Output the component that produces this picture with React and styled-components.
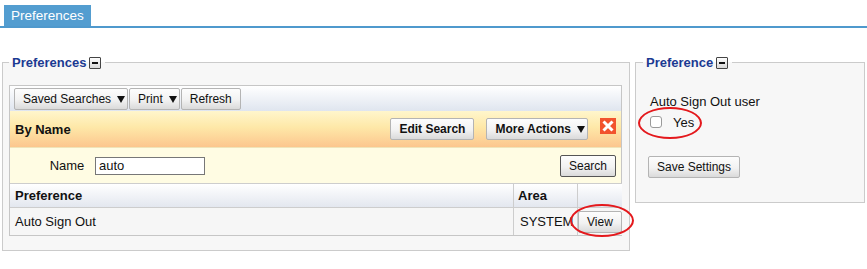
import React from "react";
import styled, { createGlobalStyle } from "styled-components";

const GlobalStyle = createGlobalStyle`
  html, body { margin: 0; padding: 0; background: #fff; }
  body { font-family: "Liberation Sans", Arial, sans-serif; font-size: 13px; color: #111; }
  * { box-sizing: border-box; }
`;

const TabBar = styled.div`
  display: flex;
  padding: 5px 0 0 4px;
  border-bottom: 2px solid #4f99cd;
`;

const Tab = styled.div`
  background: #539dd0;
  color: #fff;
  font-size: 13.5px;
  height: 21px;
  line-height: 21px;
  padding: 0 7px;
`;

const Columns = styled.div`
  display: flex;
  align-items: flex-start;
  gap: 5px;
  margin-top: 27px;
  padding-left: 2px;
`;

const Panel = styled.fieldset`
  margin: 0;
  width: ${(p) => p.$width}px;
  border: 1px solid #cbcbcb;
  background: #f7f7f7;
  padding: ${(p) => p.$pad};
  min-width: 0;
`;

const Legend = styled.legend`
  display: flex;
  align-items: center;
  gap: 3px;
  padding: 0 4px 0 3px;
  margin-left: ${(p) => p.$offset || 0}px;
  color: #1b3a92;
  font-weight: bold;
  font-size: 13px;
  line-height: 15px;
`;

const Collapse = styled.span`
  display: inline-flex;
  align-items: center;
  justify-content: center;
  width: 12px;
  height: 12px;
  border: 1px solid #444;
  border-radius: 1px;
  background: linear-gradient(#fdfdfd, #d8d8d8);
  &::after {
    content: "";
    width: 6px;
    height: 2px;
    background: #111;
  }
`;

const Grid = styled.div`
  border: 1px solid #c6c6c6;
  background: #fff;
`;

const Toolbar = styled.div`
  display: flex;
  gap: 1px;
  height: 25px;
  padding: 2px 4px 0;
  background: linear-gradient(#ffffff, #dfe5ef);
`;

const Button = styled.button`
  display: inline-flex;
  align-items: center;
  gap: 6px;
  font-family: "Liberation Sans", Arial, sans-serif;
  font-size: 12px;
  font-weight: ${(p) => (p.$bold ? "bold" : "normal")};
  color: #111;
  height: 22px;
  padding: 0 ${(p) => (p.$caret ? 2 : 8)}px 0 8px;
  border: 1px solid ${(p) => p.$border || "#b4b4b4"};
  border-radius: 2px;
  background: linear-gradient(#fdfdfd 0%, #f2f2f2 55%, #dadada 100%);
  cursor: pointer;
  white-space: nowrap;
`;

const Caret = styled.span`
  width: 0;
  height: 0;
  border-left: 4px solid transparent;
  border-right: 4px solid transparent;
  border-top: 7px solid #111;
  margin-top: 1px;
`;

const FilterHeader = styled.div`
  display: flex;
  align-items: center;
  height: 36px;
  padding: 0 5px 0 5px;
  background: linear-gradient(#fff6cc, #fee8a8 45%, #fcc68e);
`;

const FilterTitle = styled.div`
  font-weight: bold;
  flex: 1;
`;

const HeaderActions = styled.div`
  display: flex;
  align-items: center;
  gap: 12px;
`;

const CloseIcon = styled.svg`
  display: block;
  margin-top: -6px;
`;

const SearchRow = styled.div`
  display: flex;
  align-items: center;
  height: 36px;
  padding: 0 5px 0 29px;
  background: #fffce3;
  border-top: 1px solid #f0e4b8;
`;

const FieldLabel = styled.label`
  width: 56px;
  text-align: center;
`;

const TextInput = styled.input`
  width: 110px;
  height: 18px;
  border: 1px solid #777;
  padding: 0 3px;
  font-family: "Liberation Sans", Arial, sans-serif;
  font-size: 13px;
  color: #111;
  background: #fff;
  flex: none;
  margin-right: auto;
`;

const Table = styled.div`
  display: grid;
  grid-template-columns: 503px 64px 1fr;
`;

const HeadCell = styled.div`
  height: 24px;
  display: flex;
  align-items: center;
  padding-left: ${(p) => p.$pl ?? 5}px;
  font-weight: bold;
  background: linear-gradient(#ffffff, #e3e7ef);
  border-top: 1px solid #cdcdcd;
  border-left: ${(p) => (p.$first ? "none" : "1px solid #cdcdcd")};
`;

const Cell = styled.div`
  position: relative;
  height: 28px;
  display: flex;
  align-items: center;
  padding-left: ${(p) => p.$pl ?? 5}px;
  background: #f6f6f6;
  border-top: 1px solid #cdcdcd;
  border-left: ${(p) => (p.$first ? "none" : "1px solid #cdcdcd")};
`;

const Ellipse = styled.div`
  position: absolute;
  left: ${(p) => p.$x}px;
  top: ${(p) => p.$y}px;
  width: ${(p) => p.$w}px;
  height: ${(p) => p.$h}px;
  border: 2px solid #e4181c;
  border-radius: 50%;
  pointer-events: none;
`;

const Setting = styled.div`
  padding-left: 2px;
`;

const SettingLabel = styled.div`
  line-height: 16px;
`;

const CheckRow = styled.div`
  position: relative;
  display: flex;
  align-items: center;
  gap: 11px;
  height: 18px;
  margin-top: 3px;
`;

const Check = styled.span`
  width: 12px;
  height: 12px;
  border: 1px solid #9a9a9a;
  border-radius: 3px;
  background: #fff;
`;

const Actions = styled.div`
  margin-top: 25px;
`;

export default function App() {
  return (
    <>
      <GlobalStyle />
      <TabBar>
        <Tab>Preferences</Tab>
      </TabBar>
      <Columns>
        <Panel $width={628} $pad="15px 7px 14px 6px">
          <Legend>
            Preferences <Collapse />
          </Legend>
          <Grid>
            <Toolbar>
              <Button $caret>Saved Searches <Caret /></Button>
              <Button $caret>Print <Caret /></Button>
              <Button>Refresh</Button>
            </Toolbar>
            <FilterHeader>
              <FilterTitle>By Name</FilterTitle>
              <HeaderActions>
                <Button $bold>Edit Search</Button>
                <Button $bold $caret>More Actions <Caret /></Button>
                <CloseIcon width="16" height="16" viewBox="0 0 16 16">
                  <rect width="16" height="16" fill="#f2532d" />
                  <path d="M3.5 3.5 L12.5 12.5 M12.5 3.5 L3.5 12.5" stroke="#fff" strokeWidth="3" />
                </CloseIcon>
              </HeaderActions>
            </FilterHeader>
            <SearchRow>
              <FieldLabel>Name</FieldLabel>
              <TextInput defaultValue="auto" />
              <Button $border="#555">Search</Button>
            </SearchRow>
            <Table>
              <HeadCell $first>Preference</HeadCell>
              <HeadCell $pl={4}>Area</HeadCell>
              <HeadCell />
              <Cell $first>Auto Sign Out</Cell>
              <Cell $pl={6}>SYSTEM</Cell>
              <Cell $pl={0}>
                <Button>View</Button>
                <Ellipse $x={-8} $y={-4} $w={64} $h={33} />
              </Cell>
            </Table>
          </Grid>
        </Panel>
        <Panel $width={230} $pad="24px 10px 24px 12px">
          <Legend $offset={-5}>
            Preference <Collapse />
          </Legend>
          <Setting>
            <SettingLabel>Auto Sign Out user</SettingLabel>
            <CheckRow>
              <Check />
              <span>Yes</span>
              <Ellipse $x={-12} $y={-6} $w={64} $h={32} />
            </CheckRow>
          </Setting>
          <Actions>
            <Button>Save Settings</Button>
          </Actions>
        </Panel>
      </Columns>
    </>
  );
}
